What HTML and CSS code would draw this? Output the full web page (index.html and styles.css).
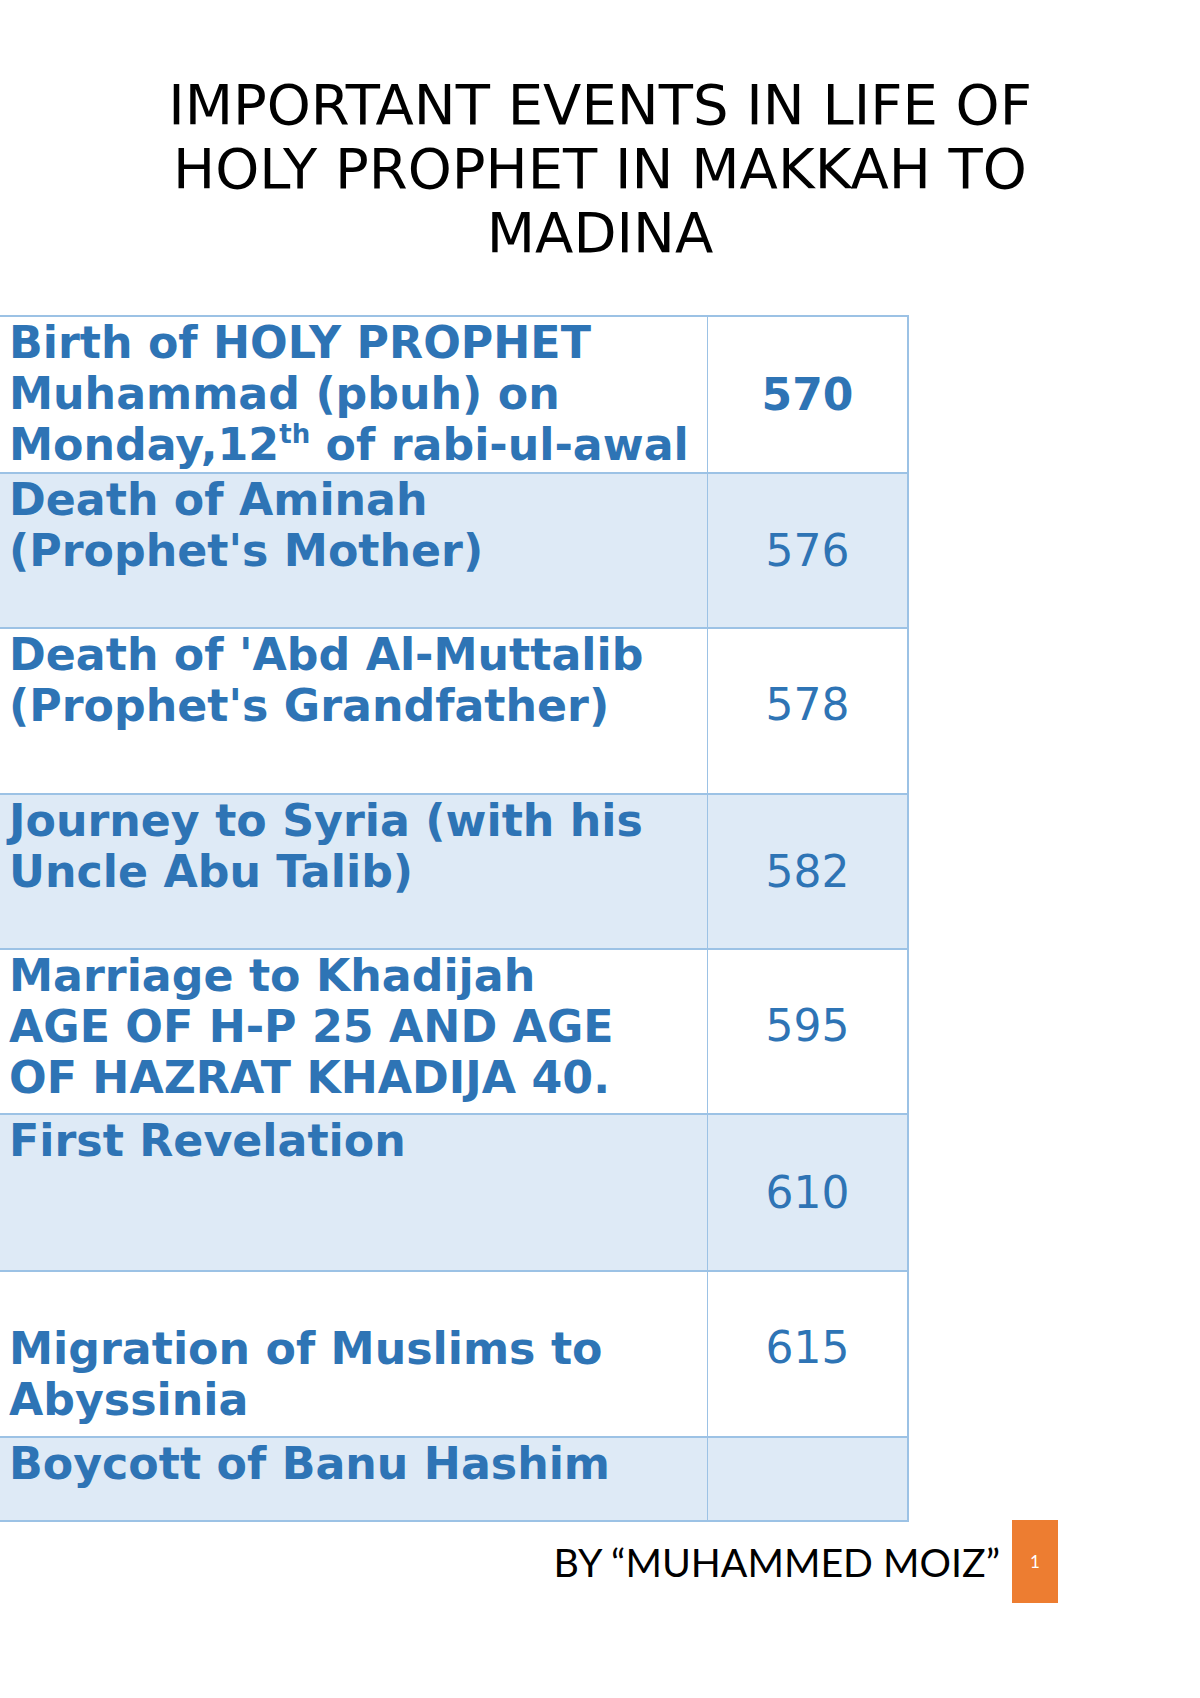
FILE: index.html
```html
<!DOCTYPE html>
<html lang="en">
<head>
<meta charset="utf-8">
<title>Important Events in Life of Holy Prophet</title>
<link rel="stylesheet" href="styles.css">
</head>
<body>
<div class="page">
  <h1 class="title">IMPORTANT EVENTS IN LIFE OF HOLY PROPHET IN MAKKAH TO MADINA</h1>

  <div class="events">
    <div class="row h157">
      <div class="event">Birth of HOLY PROPHET<br>Muhammad (pbuh) on<br>Monday,12<sup>th</sup> of rabi-ul-awal</div>
      <div class="year strong">570</div>
    </div>
    <div class="row h155">
      <div class="event">Death of Aminah<br>(Prophet's Mother)</div>
      <div class="year">576</div>
    </div>
    <div class="row h166 tall">
      <div class="event">Death of 'Abd Al-Muttalib<br>(Prophet's Grandfather)</div>
      <div class="year">578</div>
    </div>
    <div class="row h155">
      <div class="event">Journey to Syria (with his<br>Uncle Abu Talib)</div>
      <div class="year">582</div>
    </div>
    <div class="row h165 tall">
      <div class="event">Marriage to Khadijah<br>AGE OF H-P 25 AND AGE<br>OF HAZRAT KHADIJA 40.</div>
      <div class="year">595</div>
    </div>
    <div class="row h157">
      <div class="event">First Revelation</div>
      <div class="year">610</div>
    </div>
    <div class="row h166 tall">
      <div class="event lead-gap">Migration of Muslims to<br>Abyssinia</div>
      <div class="year">615</div>
    </div>
    <div class="row h84">
      <div class="event">Boycott of Banu Hashim</div>
      <div class="year"></div>
    </div>
  </div>

  <footer class="footer">
    <span class="author">BY “MUHAMMED MOIZ”</span>
    <span class="page-num">1</span>
  </footer>
</div>
</body>
</html>
```

FILE: styles.css
```css
* {
  box-sizing: border-box;
}

html, body {
  margin: 0;
  padding: 0;
  background: #ffffff;
}

body {
  width: 1200px;
  min-height: 1698px;
  font-family: "DejaVu Sans", "Liberation Sans", sans-serif;
}

.page {
  padding-top: 73px;
}

.title {
  width: 960px;
  margin: 0 auto;
  font-family: "DejaVu Sans", sans-serif;
  font-weight: 400;
  font-size: 56px;
  line-height: 64px;
  text-align: center;
  color: #000000;
}

.events {
  width: 909px;
  margin-top: 50px;
  border-top: 2px solid #9cc2e5;
  border-right: 2px solid #9cc2e5;
}

.row {
  display: flex;
  border-bottom: 2px solid #9cc2e5;
  background: #ffffff;
}

.row:nth-child(even) {
  background: #deeaf6;
}

.h84 { height: 84px; }
.h155 { height: 155px; }
.h157 { height: 157px; }
.h165 { height: 165px; }
.h166 { height: 166px; }

.event {
  flex: 0 0 707px;
  padding-left: 9px;
  font-family: "DejaVu Sans", sans-serif;
  font-weight: 700;
  font-size: 44.3px;
  line-height: 51px;
  color: #2e74b5;
}

.event sup {
  font-size: 26px;
  line-height: 0;
  vertical-align: 17px;
}

.lead-gap {
  padding-top: 51px;
}

.year {
  flex: 1;
  border-left: 1px solid #9cc2e5;
  display: flex;
  align-items: center;
  justify-content: center;
  font-family: "DejaVu Sans", sans-serif;
  font-weight: 400;
  font-size: 44px;
  line-height: 51px;
  color: #2e74b5;
}

.year.strong {
  font-weight: 700;
}

.tall .year {
  padding-bottom: 13px;
}

.footer {
  width: 1058px;
  margin-top: -2px;
  display: flex;
  justify-content: flex-end;
  align-items: flex-start;
}

.author {
  margin-top: 18px;
  margin-right: 12px;
  font-family: Lato, "Open Sans", sans-serif;
  font-size: 39.3px;
  line-height: 48px;
  color: #000000;
}

.page-num {
  width: 46px;
  height: 83px;
  background: #ed7d31;
  color: #ffffff;
  display: flex;
  align-items: center;
  justify-content: center;
  font-family: Lato, "Open Sans", sans-serif;
  font-size: 17px;
}
```
